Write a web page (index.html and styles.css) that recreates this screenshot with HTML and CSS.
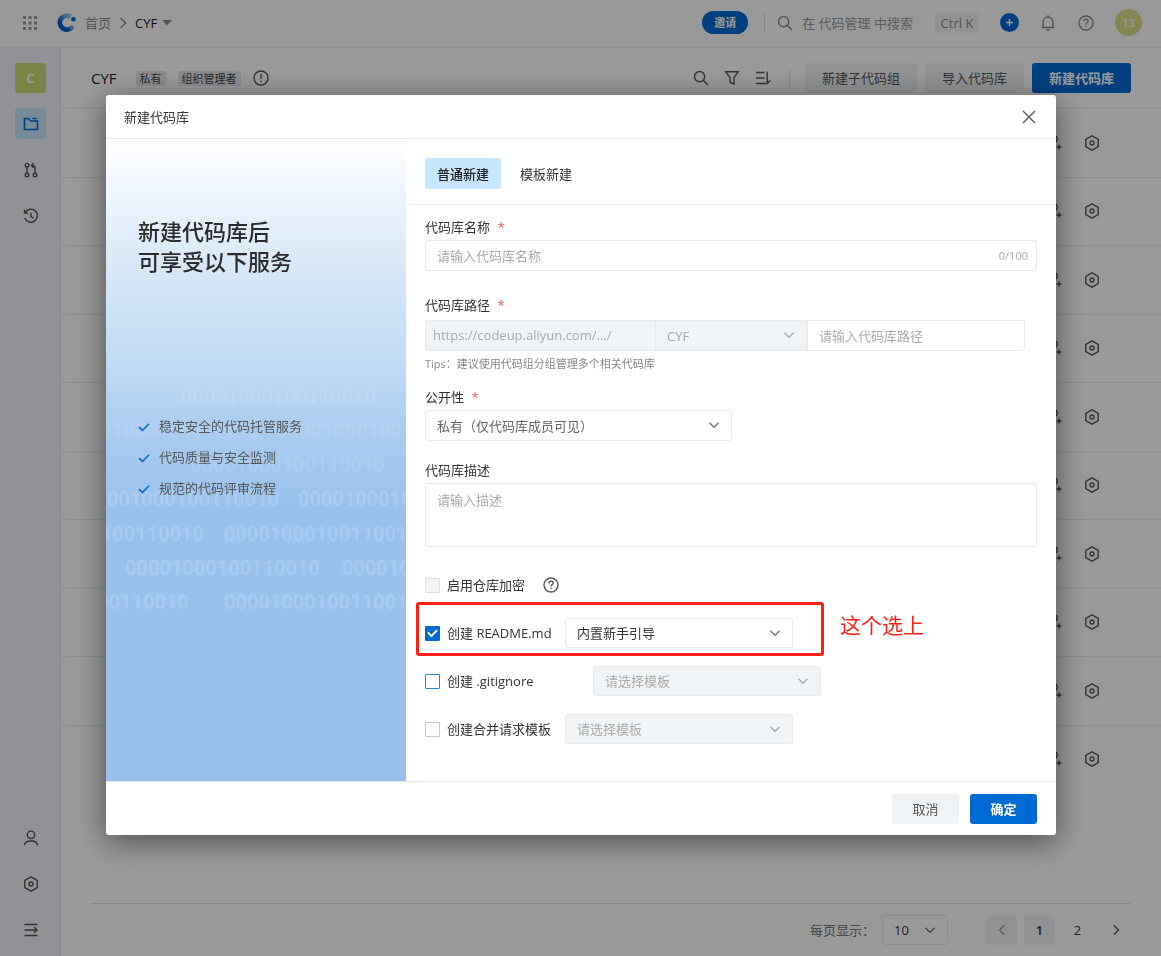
FILE: index.html
```html
<!DOCTYPE html>
<html lang="zh-CN">
<head>
    <meta charset="UTF-8">
    <meta name="viewport" content="width=device-width, initial-scale=1.0">
    <title>新建代码库</title>
    <link rel="stylesheet" href="styles.css">
</head>
<body>

    <!-- 公用图标 -->
    <svg class="symbols" aria-hidden="true">
        <symbol id="i-down" viewBox="0 0 12 12"><path d="M1.5 3.8 6 8.2l4.5-4.4"/></symbol>
        <symbol id="i-search" viewBox="0 0 16 16"><circle cx="6.6" cy="6.6" r="5.1"/><path d="m10.4 10.4 4.6 4.6"/></symbol>
        <symbol id="i-hex" viewBox="0 0 16 16"><path d="M8 .9 14.2 4.4v7.2L8 15.1 1.8 11.6V4.4z"/><circle cx="8" cy="8" r="2"/></symbol>
        <symbol id="i-help" viewBox="0 0 16 16"><circle cx="8" cy="8" r="7"/><path d="M5.900 6.400c0-1.300.9-2.100 2.100-2.100s2.100.8 2.100 1.900c0 1.500-2.100 1.600-2.100 3.200M8 10.800v1.300"/></symbol>
        <symbol id="i-adduser" viewBox="0 0 16 16"><circle cx="8" cy="4" r="3.200"/><path d="M1 14c0-3.500 2.500-5 6-5M13 9.500v5M10.500 12h5"/></symbol>
        <symbol id="i-check" viewBox="0 0 12 12"><path d="M1 6.200 4.500 9.500 11 2.800"/></symbol>
    </svg>

    <div class="app">
        <header class="topbar">
            <svg class="apps" width="14" height="14" viewBox="0 0 14 14">
                <path d="M0 0h3v3H0zM5.500 0h3v3h-3zM11 0h3v3h-3zM0 5.500h3v3H0zM5.500 5.500h3v3h-3zM11 5.500h3v3h-3zM0 11h3v3H0zM5.500 11h3v3h-3zM11 11h3v3h-3z"/>
            </svg>
            <svg class="logo" width="20" height="20" viewBox="0 0 20 20">
                <defs>
                    <linearGradient id="logoFill" x1="0" y1="1" x2="1" y2="0">
                        <stop offset=".3" stop-color="#0062cc"/>
                        <stop offset=".8" stop-color="#8fc0ef"/>
                    </linearGradient>
                </defs>
                <path d="M14.800 14.400A6.900 6.900 0 1 1 13.600 3.800" stroke="url(#logoFill)" stroke-width="4.800" fill="none"/>
                <circle cx="14.800" cy="14.600" r="2.200" fill="#5fa2e5"/>
                <circle cx="16.400" cy="6.200" r="2.300" fill="#006ad4"/>
            </svg>
            <nav class="crumbs">
                <a class="crumb" href="#">首页</a>
                <svg class="line" width="8" height="12" viewBox="0 0 8 12"><path d="m1.500 1 5 5-5 5"/></svg>
                <a class="crumb crumb-now" href="#">CYF</a>
                <svg class="caret" width="10" height="6" viewBox="0 0 10 6"><path d="M0 0h10L5 5.500z"/></svg>
            </nav>
            <div class="topbar-right">
                <button class="invite">邀请</button>
                <span class="divider"></span>
                <svg class="line search-icon" width="16" height="16"><use href="#i-search"/></svg>
                <span class="search-text">在 代码管理 中搜索</span>
                <kbd class="shortcut">Ctrl K</kbd>
                <button class="plus" aria-label="新建">
                    <svg width="9" height="9" viewBox="0 0 9 9"><path d="M4.500 1v7M1 4.500h7"/></svg>
                </button>
                <svg class="line bell" width="16" height="16" viewBox="0 0 16 16"><path d="M1.500 12.500h13M3.200 12.500V6.800a4.800 4.800 0 0 1 9.600 0v5.700M8 .3V2M6.300 15h3.400"/></svg>
                <svg class="line help" width="16" height="16"><use href="#i-help"/></svg>
                <span class="avatar">13</span>
            </div>
        </header>

        <div class="workspace">
            <aside class="sidebar">
                <a class="side-item side-group" href="#">C</a>
                <a class="side-item active" href="#" aria-label="代码库">
                    <svg class="line" width="16" height="16" viewBox="0 0 16 16"><path d="M1.500 2.500h4l2 2.500h7v8.500h-13zM9.500 2.500h4"/></svg>
                </a>
                <a class="side-item" href="#" aria-label="合并请求">
                    <svg class="line" width="16" height="16" viewBox="0 0 16 16"><circle cx="4" cy="3.200" r="1.800"/><circle cx="4" cy="13" r="1.800"/><circle cx="12" cy="13" r="1.800"/><path d="M4 5v6.200M12 11.200V6c0-1.500-.6-2.500-3-2.500M10.500 1 8.500 3.500l2 2.300"/></svg>
                </a>
                <a class="side-item" href="#" aria-label="动态">
                    <svg class="line" width="16" height="16" viewBox="0 0 16 16"><path d="M1.800 10A6.500 6.500 0 1 0 2.200 4.500M1.500 1.500v3.500H5M8 4.800v3.700l2.600 1.600"/></svg>
                </a>
                <div class="side-bottom">
                    <a class="side-item" href="#" aria-label="成员">
                        <svg class="line" width="16" height="16" viewBox="0 0 16 16"><circle cx="8" cy="4.800" r="3.700"/><path d="M1.300 15.500c.3-3.300 2.200-4.500 6.700-4.500s6.400 1.200 6.700 4.500"/></svg>
                    </a>
                    <a class="side-item" href="#" aria-label="设置">
                        <svg class="line" width="16" height="16"><use href="#i-hex"/></svg>
                    </a>
                    <a class="side-item" href="#" aria-label="展开">
                        <svg class="line" width="16" height="16" viewBox="0 0 16 16"><path d="M1.500 2.500h13M1.500 8H14M1.500 13.500h13M11 5l3 3-3 3"/></svg>
                    </a>
                </div>
            </aside>

            <main class="content">
                <div class="page-head">
                    <h1 class="page-title">CYF</h1>
                    <span class="tag">私有</span>
                    <span class="tag">组织管理者</span>
                    <svg class="line" width="16" height="16" viewBox="0 0 16 16"><circle cx="8" cy="8" r="7"/><path d="M8 4v5M8 10.500V12"/></svg>
                    <div class="page-tools">
                        <svg class="line" width="16" height="16"><use href="#i-search"/></svg>
                        <svg class="line" width="16" height="16" viewBox="0 0 16 16"><path d="M1.800 1.800h12.400L10 7.500v6.700l-4-2V7.500z"/></svg>
                        <svg class="line" width="16" height="16" viewBox="0 0 16 16"><path d="M1 2.500h8.500M1 8h8.500M1 13.500h10M12.200 1.500v12l3-3"/></svg>
                        <span class="divider"></span>
                    </div>
                    <div class="page-actions">
                        <button class="btn">新建子代码组</button>
                        <button class="btn">导入代码库</button>
                        <button class="btn btn-primary">新建代码库</button>
                    </div>
                </div>

                <ul class="repo-list">
                    <li class="repo"><svg class="line" width="16" height="16"><use href="#i-adduser"/></svg><svg class="line" width="16" height="16"><use href="#i-hex"/></svg></li>
                    <li class="repo"><svg class="line" width="16" height="16"><use href="#i-adduser"/></svg><svg class="line" width="16" height="16"><use href="#i-hex"/></svg></li>
                    <li class="repo"><svg class="line" width="16" height="16"><use href="#i-adduser"/></svg><svg class="line" width="16" height="16"><use href="#i-hex"/></svg></li>
                    <li class="repo"><svg class="line" width="16" height="16"><use href="#i-adduser"/></svg><svg class="line" width="16" height="16"><use href="#i-hex"/></svg></li>
                    <li class="repo"><svg class="line" width="16" height="16"><use href="#i-adduser"/></svg><svg class="line" width="16" height="16"><use href="#i-hex"/></svg></li>
                    <li class="repo"><svg class="line" width="16" height="16"><use href="#i-adduser"/></svg><svg class="line" width="16" height="16"><use href="#i-hex"/></svg></li>
                    <li class="repo"><svg class="line" width="16" height="16"><use href="#i-adduser"/></svg><svg class="line" width="16" height="16"><use href="#i-hex"/></svg></li>
                    <li class="repo"><svg class="line" width="16" height="16"><use href="#i-adduser"/></svg><svg class="line" width="16" height="16"><use href="#i-hex"/></svg></li>
                    <li class="repo"><svg class="line" width="16" height="16"><use href="#i-adduser"/></svg><svg class="line" width="16" height="16"><use href="#i-hex"/></svg></li>
                    <li class="repo"><svg class="line" width="16" height="16"><use href="#i-adduser"/></svg><svg class="line" width="16" height="16"><use href="#i-hex"/></svg></li>
                </ul>

                <div class="pager">
                    <label class="pager-label" for="pageSize">每页显示：</label>
                    <div class="select pager-size">
                        <select id="pageSize"><option>10</option></select>
                        <svg class="line" width="12" height="12"><use href="#i-down"/></svg>
                    </div>
                    <button class="page-btn filled" aria-label="上一页" disabled>
                        <svg class="line" width="8" height="12" viewBox="0 0 8 12"><path d="m6 1.500-4.500 4.500L6 10.500"/></svg>
                    </button>
                    <button class="page-btn filled current">1</button>
                    <button class="page-btn">2</button>
                    <button class="page-btn" aria-label="下一页">
                        <svg class="line" width="8" height="12" viewBox="0 0 8 12"><path d="M2 1.500 6.500 6 2 10.500"/></svg>
                    </button>
                </div>
            </main>
        </div>
    </div>

    <!-- 新建代码库弹窗 -->
    <div class="overlay">
        <div class="modal" role="dialog" aria-modal="true" aria-labelledby="modalTitle">
            <div class="modal-head">
                <h2 class="modal-title" id="modalTitle">新建代码库</h2>
                <button class="close" aria-label="关闭">
                    <svg class="line" width="14" height="14" viewBox="0 0 14 14"><path d="m1 1 12 12M13 1 1 13"/></svg>
                </button>
            </div>

            <div class="modal-body">
                <section class="promo">
                    <svg class="binary" width="300" height="470" aria-hidden="true">
                        <g fill-opacity=".09">
                            <text x="75" y="265">00001000100110010</text>
                            <text x="-40" y="299">00001000100110010</text>
                            <text x="170" y="299">00001000100110010</text>
                            <text x="84" y="333">00001000100110010</text>
                        </g>
                        <g fill-opacity=".15">
                            <text x="-22" y="367">00001000100110010</text>
                            <text x="192" y="367">00001000100110010</text>
                            <text x="-97" y="402">00001000100110010</text>
                            <text x="118" y="402">00001000100110010</text>
                            <text x="19" y="436">00001000100110010</text>
                            <text x="236" y="436">00001000100110010</text>
                            <text x="-112" y="470">00001000100110010</text>
                            <text x="118" y="470">00001000100110010</text>
                        </g>
                    </svg>
                    <h3 class="promo-title">新建代码库后<br>可享受以下服务</h3>
                    <ul class="promo-list">
                        <li><svg width="12" height="12"><use href="#i-check"/></svg>稳定安全的代码托管服务</li>
                        <li><svg width="12" height="12"><use href="#i-check"/></svg>代码质量与安全监测</li>
                        <li><svg width="12" height="12"><use href="#i-check"/></svg>规范的代码评审流程</li>
                    </ul>
                </section>

                <section class="create">
                    <div class="tabs">
                        <button class="tab selected">普通新建</button>
                        <button class="tab">模板新建</button>
                    </div>

                    <form class="form">
                        <div class="field">
                            <label class="label" for="repoName">代码库名称 <span class="required">*</span></label>
                            <div class="input-box">
                                <input id="repoName" type="text" placeholder="请输入代码库名称">
                                <span class="count">0/100</span>
                            </div>
                        </div>

                        <div class="field field-path">
                            <label class="label" for="repoPath">代码库路径 <span class="required">*</span></label>
                            <div class="path-row">
                                <span class="path-prefix">https://codeup.aliyun.com/.../</span>
                                <div class="select path-group">
                                    <select aria-label="代码组" disabled><option>CYF</option></select>
                                    <svg class="line" width="12" height="12"><use href="#i-down"/></svg>
                                </div>
                                <input class="path-input" id="repoPath" type="text" placeholder="请输入代码库路径">
                            </div>
                            <p class="tips">Tips：建议使用代码组分组管理多个相关代码库</p>
                        </div>

                        <div class="field">
                            <label class="label" for="visibility">公开性 <span class="required">*</span></label>
                            <div class="select visibility">
                                <select id="visibility"><option>私有（仅代码库成员可见）</option></select>
                                <svg class="line" width="12" height="12"><use href="#i-down"/></svg>
                            </div>
                        </div>

                        <div class="field">
                            <label class="label" for="desc">代码库描述</label>
                            <textarea id="desc" class="desc" placeholder="请输入描述"></textarea>
                        </div>

                        <div class="options">
                            <div class="option">
                                <label class="check"><input type="checkbox" disabled>启用仓库加密</label>
                                <svg class="line encrypt-help" width="16" height="16"><use href="#i-help"/></svg>
                            </div>
                            <div class="option marked">
                                <label class="check check-fixed"><input type="checkbox" checked>创建 README.md</label>
                                <div class="select template">
                                    <select aria-label="README 模板"><option>内置新手引导</option></select>
                                    <svg class="line" width="12" height="12"><use href="#i-down"/></svg>
                                </div>
                                <span class="mark-frame"></span>
                                <span class="mark-text">这个选上</span>
                            </div>
                            <div class="option">
                                <label class="check check-wide"><input class="hover" type="checkbox">创建 .gitignore</label>
                                <div class="select template">
                                    <select aria-label=".gitignore 模板" disabled><option>请选择模板</option></select>
                                    <svg class="line" width="12" height="12"><use href="#i-down"/></svg>
                                </div>
                            </div>
                            <div class="option">
                                <label class="check check-fixed"><input type="checkbox">创建合并请求模板</label>
                                <div class="select template">
                                    <select aria-label="合并请求模板" disabled><option>请选择模板</option></select>
                                    <svg class="line" width="12" height="12"><use href="#i-down"/></svg>
                                </div>
                            </div>
                        </div>
                    </form>
                </section>
            </div>

            <div class="modal-foot">
                <button class="btn foot-btn">取消</button>
                <button class="btn btn-primary foot-btn">确定</button>
            </div>
        </div>
    </div>

</body>
</html>
```

FILE: styles.css
```css
* {
    box-sizing: border-box;
}

body {
    margin: 0;
    font-family: "Open Sans", "Noto Sans CJK SC", sans-serif;
    font-size: 13px;
    line-height: 20px;
    color: #333;
    background: #fff;
}

h1, h2, h3, p, ul {
    margin: 0;
    padding: 0;
    font-weight: normal;
}

ul {
    list-style: none;
}

a {
    color: inherit;
    text-decoration: none;
}

button, input, select, textarea {
    font: inherit;
    color: inherit;
    margin: 0;
}

button {
    border: none;
    padding: 0;
    background: none;
    cursor: pointer;
}

svg {
    flex: none;
    display: block;
}

.symbols {
    position: absolute;
    width: 0;
    height: 0;
}

.line {
    fill: none;
    stroke: #555;
    stroke-width: 1.4;
}

/* 页面框架 */
.app {
    display: flex;
    flex-direction: column;
    min-height: 100vh;
}

.workspace {
    display: flex;
    flex: 1;
}

/* 顶部导航 */
.topbar {
    display: flex;
    align-items: center;
    height: 48px;
    padding: 0 19px 2px 23px;
    border-bottom: 1px solid #e6e8eb;
}

.apps {
    fill: #999;
}

.logo {
    margin-left: 20px;
}

.crumbs {
    display: flex;
    align-items: center;
    gap: 8px;
    margin-left: 8px;
}

.crumb {
    color: #8c8c8c;
}

.crumbs .line {
    stroke: #8c8c8c;
}

.crumb-now {
    color: #222;
}

.caret {
    margin-left: -3px;
    fill: #8c8c8c;
}

.topbar-right {
    display: flex;
    align-items: center;
    margin-left: auto;
}

.topbar-right .line {
    stroke: #8c8c8c;
}

.invite {
    width: 46px;
    height: 23px;
    border-radius: 12px;
    background: #006ad4;
    color: #fff;
    font-size: 11px;
    font-weight: bold;
    line-height: 23px;
}

.divider {
    width: 1px;
    height: 19px;
    background: #dcdfe3;
}

.topbar .divider {
    margin: 0 12px 0 16px;
}

.search-text {
    margin-left: 9px;
    color: #999;
}

.shortcut {
    width: 44px;
    margin-left: 22px;
    border-radius: 3px;
    background: #f0f3f6;
    color: #8c8c8c;
    font-family: inherit;
    text-align: center;
}

.plus {
    display: flex;
    align-items: center;
    justify-content: center;
    width: 19px;
    height: 19px;
    margin-left: 21px;
    border-radius: 50%;
    background: #006ad4;
    stroke: #fff;
    stroke-width: 1.4;
}

.bell {
    margin-left: 21px;
}

.help {
    margin-left: 22px;
}

.avatar {
    width: 27px;
    height: 27px;
    margin-left: 21px;
    border-radius: 50%;
    background: #dcdf8a;
    color: #fff;
    font-size: 11px;
    font-weight: 600;
    line-height: 27px;
    text-align: center;
}

/* 侧边栏 */
.sidebar {
    display: flex;
    flex-direction: column;
    gap: 15px;
    width: 61px;
    padding: 15px 14px 11px 15px;
    border-right: 1px solid #e3e6f0;
    background: #f2f4f8;
}

.side-item {
    display: flex;
    align-items: center;
    justify-content: center;
    width: 31px;
    height: 31px;
    border-radius: 3px;
}

.side-group {
    height: 30px;
    background: #cbdc75;
    color: #fff;
    font-weight: bold;
}

.side-item.active {
    background: #c6e7ff;
}

.active .line {
    stroke: #006ad4;
    stroke-width: 1.6;
}

.side-bottom {
    display: flex;
    flex-direction: column;
    gap: 15px;
    margin-top: auto;
}

/* 代码库列表 */
.content {
    display: flex;
    flex: 1;
    flex-direction: column;
}

.page-head {
    display: flex;
    align-items: center;
    gap: 12px;
    height: 61px;
    padding: 0 30px;
    border-bottom: 1px solid #eceef1;
}

.page-title {
    margin-right: 7px;
    color: #222;
    font-size: 15px;
}

.tag {
    padding: 0 4px;
    border-radius: 2px;
    background: #e6e8ea;
    color: #444;
    font-size: 11px;
    line-height: 15px;
}

.page-tools {
    display: flex;
    align-items: center;
    gap: 15px;
    margin-left: auto;
}

.page-tools .divider {
    margin-left: 3px;
}

.page-actions {
    display: flex;
    gap: 8px;
    margin-left: 3px;
}

.btn {
    height: 30px;
    padding: 0 17px;
    border-radius: 3px;
    background: #f0f3f6;
    color: #555;
    line-height: 30px;
}

.btn-primary {
    background: #006ad4;
    color: #fff;
    font-weight: bold;
}

.repo-list {
    display: flex;
    flex: 1;
    flex-direction: column;
    margin-bottom: 110px;
}

.repo {
    display: flex;
    flex: 1;
    align-items: center;
    justify-content: flex-end;
    gap: 22px;
    padding-right: 61px;
    border-bottom: 1px solid #eceef1;
}

.repo:last-child {
    border-bottom: none;
}

/* 分页 */
.pager {
    display: flex;
    align-items: center;
    justify-content: flex-end;
    gap: 7px;
    height: 53px;
    margin: 0 30px;
    border-top: 1px solid #dcdfe3;
}

.pager-label {
    color: #777;
}

.pager-size {
    width: 66px;
    margin-right: 31px;
}

.page-btn {
    display: flex;
    align-items: center;
    justify-content: center;
    width: 31px;
    height: 30px;
    border-radius: 3px;
}

.filled {
    background: #f0f3f6;
}

.page-btn:disabled .line {
    stroke: #999;
}

.current {
    font-weight: 600;
}

/* 弹窗 */
.overlay {
    position: fixed;
    inset: 0;
    padding: 95px 105px 0 106px;
    background: rgba(0, 0, 0, 0.4);
    overflow: auto;
}

.modal {
    border-radius: 3px;
    background: #fff;
    box-shadow: 0 6px 30px rgba(0, 0, 0, 0.5);
}

.modal-head {
    display: flex;
    align-items: center;
    justify-content: space-between;
    height: 44px;
    padding: 0 20px 0 18px;
    border-bottom: 1px solid #e6e8eb;
}

.modal-title {
    font-size: 13px;
}

.modal-body {
    display: flex;
}

.modal-foot {
    display: flex;
    justify-content: flex-end;
    gap: 11px;
    padding: 12px 19px 11px;
    border-top: 1px solid #e6e8eb;
}

.foot-btn {
    width: 67px;
}

/* 左侧介绍 */
.promo {
    position: relative;
    width: 300px;
    padding: 77px 32px 0;
    background: linear-gradient(#fff 0, #edf4fd 60px, #dceaf8 112px, #bfdaf4 230px, #aaccef 290px, #99c1ee 372px);
}

.binary {
    position: absolute;
    top: 0;
    left: 0;
    overflow: hidden;
    fill: #fff;
    font-family: Roboto, sans-serif;
    font-size: 20px;
    font-weight: bold;
}

.promo-title {
    position: relative;
    margin-bottom: 135px;
    color: #2b2b2b;
    font-size: 22px;
    font-weight: 500;
    line-height: 30px;
}

.promo-list {
    position: relative;
    color: #555;
    line-height: 31px;
}

.promo-list li {
    display: flex;
    align-items: center;
    gap: 9px;
}

.promo-list svg {
    fill: none;
    stroke: #006ad4;
    stroke-width: 1.6;
}

/* 右侧表单 */
.create {
    flex: 1;
    min-width: 0;
}

.tabs {
    display: flex;
    gap: 7px;
    padding: 19px 19px 15px;
    border-bottom: 1px solid #eef2f6;
}

.tab {
    height: 31px;
    padding: 0 12px;
    border-radius: 3px;
}

.selected {
    background: #c6e7ff;
    color: #222;
    font-weight: 500;
}

.form {
    padding: 12px 19px 37px;
}

.field {
    margin-bottom: 19px;
}

.field:first-child {
    margin-bottom: 24px;
}

.field-path {
    margin-bottom: 14px;
}

.label {
    display: block;
    margin-bottom: 3px;
}

.field-path .label {
    margin-bottom: 5px;
}

.required {
    margin-left: 4px;
    color: #e8564c;
}

.input-box {
    display: flex;
    align-items: center;
    height: 31px;
    padding: 0 8px 0 11px;
    border: 1px solid #e6eaed;
    border-radius: 3px;
}

.input-box input {
    flex: 1;
    min-width: 0;
    padding: 0;
    border: none;
    outline: none;
}

::placeholder {
    color: #aaa;
    opacity: 1;
}

.count {
    color: #aaa;
    font-size: 11px;
}

.select {
    position: relative;
}

.select select {
    display: block;
    width: 100%;
    height: 30px;
    padding: 0 30px 0 11px;
    border: 1px solid #e6eaed;
    border-radius: 3px;
    background: transparent;
    appearance: none;
    opacity: 1;
}

.select .line {
    position: absolute;
    top: 9px;
    right: 12px;
    stroke: #777;
    pointer-events: none;
}

.select select:disabled {
    background: #f0f4f7;
    color: #aaa;
}

.select select:disabled + .line {
    stroke: #aaa;
}

.path-row {
    display: flex;
    width: 600px;
    max-width: 100%;
    height: 31px;
}

.path-prefix {
    width: 230px;
    padding: 4px 7px;
    border: 1px solid #e6eaed;
    border-right: none;
    border-radius: 3px 0 0 3px;
    background: #f0f4f7;
    color: #aaa;
}

.path-group {
    width: 152px;
}

.path-group select {
    height: 31px;
    border-radius: 0;
}

.path-input {
    flex: 1;
    min-width: 0;
    padding: 0 11px;
    border: 1px solid #e6eaed;
    border-radius: 0 3px 3px 0;
}

.tips {
    margin-top: 4px;
    color: #888;
    font-size: 11px;
    line-height: 18px;
}

.visibility {
    width: 307px;
    color: #666;
}

.visibility select {
    height: 31px;
}

.desc {
    display: block;
    width: 100%;
    height: 64px;
    padding: 6px 11px;
    border: 1px solid #e6eaed;
    border-radius: 3px;
    resize: none;
}

/* 选项 */
.options {
    display: flex;
    flex-direction: column;
    gap: 18px;
    padding-top: 4px;
}

.option {
    position: relative;
    display: flex;
    align-items: center;
    height: 30px;
}

.check {
    display: flex;
    align-items: center;
    gap: 7px;
}

.check-fixed {
    width: 140px;
}

.check-wide {
    width: 168px;
}

.check input {
    flex: none;
    width: 15px;
    height: 15px;
    border: 1px solid #c4cad1;
    border-radius: 1px;
    background: #fff;
    appearance: none;
}

.check input:disabled {
    border-color: #dce1e6;
    background: #f0f4f7;
}

.check .hover {
    border-color: #1b8be0;
}

.check input:checked {
    display: flex;
    align-items: center;
    justify-content: center;
    border-color: #006ad4;
    background: #006ad4;
}

/* 对勾 */
.check input:checked::before {
    content: "";
    width: 7px;
    height: 4px;
    margin-bottom: 2px;
    border-left: 2px solid #fff;
    border-bottom: 2px solid #fff;
    transform: rotate(-45deg);
}

.encrypt-help {
    margin-left: 18px;
}

.template {
    width: 228px;
}

/* 红色标注 */
.mark-frame {
    position: absolute;
    top: -16px;
    left: -9px;
    width: 408px;
    height: 54px;
    border: 3px solid #ff2015;
    border-radius: 3px;
    pointer-events: none;
}

.mark-text {
    position: absolute;
    top: -8px;
    left: 415px;
    color: #ff2015;
    font-size: 21px;
    line-height: 30px;
}
```
